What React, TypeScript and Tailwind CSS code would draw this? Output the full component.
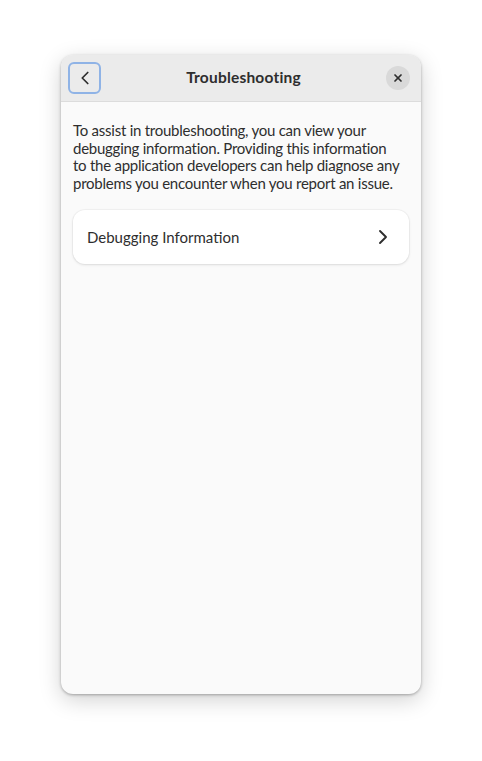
import { ChevronLeft, ChevronRight, X } from 'lucide-react'

export default function App() {
  return (
    <div className="w-[482px] h-[761px] bg-white flex justify-center pt-[55px]" style={{ fontFamily: 'Lato, sans-serif' }}>
      <div className="w-[360px] h-[639px] bg-[#fafafa] rounded-[12px] shadow-[0_1px_3px_rgba(0,0,0,0.3),0_6px_22px_rgba(0,0,0,0.18)] overflow-hidden flex flex-col">
        {/* header */}
        <div className="h-[47px] bg-[#ebebeb] border-b border-[#dcdcdc] flex items-center justify-between px-[7px]">
          <button className="w-[33px] h-[32px] rounded-[6px] border-2 border-[#8fb3e6] flex items-center justify-center text-[#2e2e2e]">
            <ChevronLeft size={22} strokeWidth={1.9} />
          </button>
          <span className="text-[15.5px] font-bold text-[#2e2e2e] tracking-[0.2px]">Troubleshooting</span>
          <button className="w-[24px] h-[24px] mr-[4px] rounded-full bg-[#d9d9d9] flex items-center justify-center text-[#2e2e2e]">
            <X size={12} strokeWidth={3.5} />
          </button>
        </div>

        {/* content */}
        <div className="px-[12px] pt-[20px]">
          <p className="text-[15px] leading-[17.6px] tracking-[-0.25px] text-[#2e2e2e]">
            To assist in troubleshooting, you can view your debugging information. Providing this information
            <br />
            to the application developers can help diagnose any problems you encounter when you report an issue.
          </p>
          <div className="mt-[18px] h-[54px] bg-white rounded-[12px] shadow-[0_0_0_1px_rgba(0,0,0,0.03),0_1px_3px_rgba(0,0,0,0.1)] flex items-center justify-between pl-[14px] pr-[14px]">
            <span className="text-[15px] text-[#2e2e2e]">Debugging Information</span>
            <ChevronRight size={24} strokeWidth={1.9} className="text-[#2e2e2e]" />
          </div>
        </div>
      </div>
    </div>
  )
}
